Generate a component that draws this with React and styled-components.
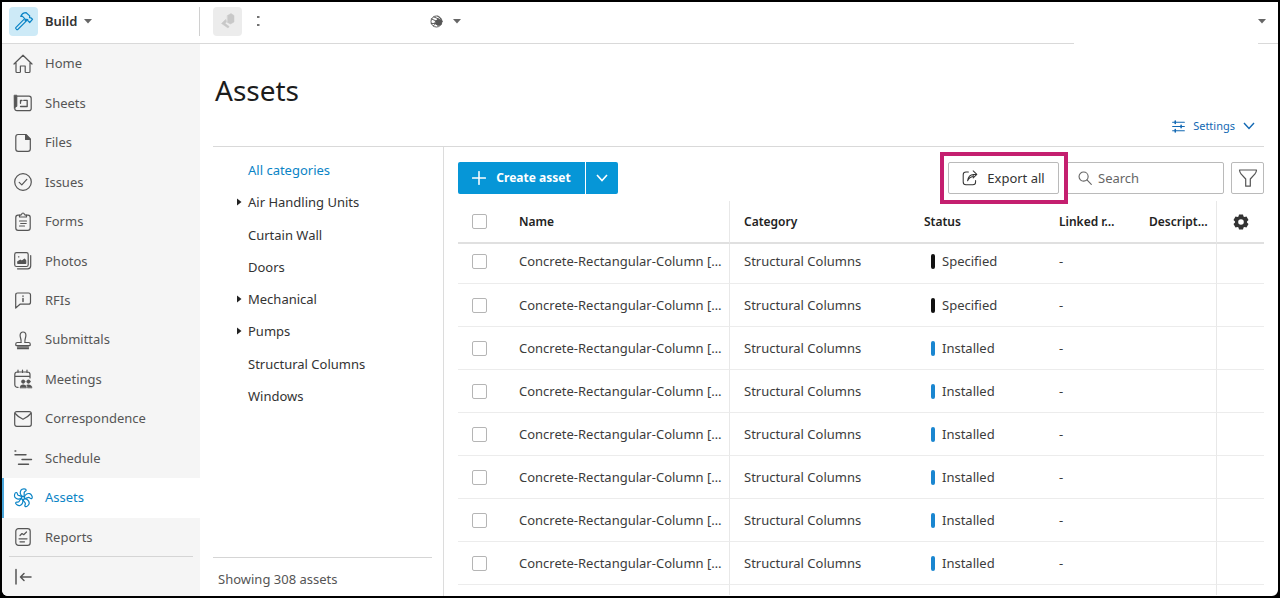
import React from "react";
import styled, { createGlobalStyle, css } from "styled-components";

const GlobalStyle = createGlobalStyle`
  *, *::before, *::after { box-sizing: border-box; }
  body { margin: 0; background: #000; }
  body, button, input { font-family: "Noto Sans", "Open Sans", sans-serif; font-size: 13px; }
  button { margin: 0; padding: 0; border: 0; background: none; color: inherit; cursor: pointer; }
  ul { list-style: none; margin: 0; padding: 0; }
  a { color: inherit; text-decoration: none; }
  svg { display: block; flex: none; }
`;

const Frame = styled.div`
  display: flex;
  flex-direction: column;
  min-height: 100vh;
  border: 2px solid #000;
  border-radius: 0 0 8px 8px;
  background: #fff;
  color: #333;
  line-height: 20px;
`;

const TopBar = styled.header`
  display: flex;
  align-items: center;
  height: 42px;
  border-bottom: 1px solid #d9d9d9;
`;

const ProductArea = styled.div`
  display: flex;
  align-items: center;
  width: 198px;
  height: 29px;
  margin-bottom: 3px;
  padding-left: 7px;
  border-right: 1px solid #d0d0d0;
`;

const ProductButton = styled.button`
  display: flex;
  align-items: center;
  gap: 7px;
  font-weight: 600;
  color: #333;
`;

const Tile = styled.span`
  display: grid;
  place-items: center;
  width: 29px;
  height: 29px;
  border-radius: 4px;
  background: ${(p) => (p.$muted ? "#ececec" : "#cdeaf7")};
  color: ${(p) => (p.$muted ? "#c8c8c8" : "#0a84c6")};
`;

const ProjectArea = styled.div`
  display: flex;
  flex: 1;
  align-items: center;
  gap: 14px;
  margin-bottom: 3px;
  padding-left: 13px;
`;

const ProjectName = styled.span`
  width: 160px;
`;

const ProjectButton = styled.button`
  display: flex;
  align-items: center;
  gap: 10px;
  color: #555;
`;

const AccountSpace = styled.div`
  align-self: stretch;
  width: 184px;
  margin-bottom: -1px;
  background: #fff;
`;

const AccountButton = styled.button`
  width: 20px;
  height: 20px;
  margin-bottom: 3px;
  color: #666;
`;

const Body = styled.div`
  display: flex;
  flex: 1;
`;

const SideBar = styled.nav`
  display: flex;
  flex-direction: column;
  width: 198px;
  background: #f5f5f5;
  border-bottom-left-radius: 6px;
`;

const NavList = styled.ul`
  display: grid;
  flex: 1;
  grid-auto-rows: 1fr;
`;

const NavLink = styled.a`
  display: flex;
  align-items: center;
  gap: 12px;
  height: 100%;
  padding-left: 11px;
  color: #555;
  ${(p) =>
    p.$active &&
    css`
      padding-left: 9px;
      border-left: 2px solid #4ba7dc;
      background: #fff;
      color: #0a84c6;
    `}
`;

const NavText = styled.span`
  padding-bottom: 1px;
`;

const CollapseBar = styled.div`
  display: flex;
  align-items: center;
  height: 40px;
  margin: -1px 7px 0;
  padding-left: 4px;
  border-top: 1px solid #d5d5d5;
  color: #555;
`;

const Main = styled.main`
  display: flex;
  flex: 1;
  flex-direction: column;
  min-width: 0;
  padding: 0 14px 0 13px;
`;

const PageHead = styled.div`
  display: flex;
  justify-content: space-between;
  height: 103px;
  border-bottom: 1px solid #d9d9d9;
`;

const Title = styled.h1`
  margin: 28px 0 0 2px;
  font-size: 28px;
  font-weight: 400;
  line-height: 36px;
  color: #1c1c1c;
`;

const SettingsButton = styled.button`
  display: flex;
  align-items: center;
  align-self: flex-end;
  gap: 8px;
  margin: 0 9px 10px 0;
  font-size: 11px;
  line-height: 20px;
  color: #1268b3;
`;

const Content = styled.div`
  display: flex;
  flex: 1;
`;

const CategoryPane = styled.section`
  display: flex;
  flex-direction: column;
  width: 231px;
  padding-right: 11px;
  border-right: 1px solid #dcdcdc;
`;

const CategoryList = styled.ul`
  display: grid;
  grid-auto-rows: 1fr;
  height: 258px;
  margin-top: 7px;
`;

const CategoryItem = styled.li`
  display: flex;
  align-items: center;
  color: ${(p) => (p.$active ? "#0a84c6" : "#333")};
`;

const Twisty = styled.span`
  display: flex;
  justify-content: flex-end;
  width: 29px;
  margin-right: 6px;
`;

const PaneFooter = styled.p`
  margin: auto 0 0;
  padding: 11px 5px 7px;
  border-top: 1px solid #d5d5d5;
  color: #555;
`;

const AssetsPane = styled.section`
  flex: 1;
  min-width: 0;
  padding-left: 14px;
`;

const Toolbar = styled.div`
  display: flex;
  gap: 7px;
  padding: 15px 0 7px;
`;

const CreateGroup = styled.div`
  display: flex;
  gap: 1px;
  margin-right: auto;
`;

const PrimaryButton = styled.button`
  display: flex;
  align-items: center;
  justify-content: center;
  gap: 10px;
  width: ${(p) => (p.$narrow ? 32 : 127)}px;
  height: 32px;
  padding-bottom: 1px;
  border-radius: ${(p) => (p.$narrow ? "0 2px 2px 0" : "2px 0 0 2px")};
  background: #0696d7;
  color: #fff;
  font-size: 12px;
  font-weight: 700;
`;

const OutlineButton = styled.button`
  display: flex;
  align-items: center;
  justify-content: center;
  gap: 9px;
  width: ${(p) => (p.$square ? 33 : 111)}px;
  height: 32px;
  padding-bottom: 1px;
  border: 1px solid #bababa;
  border-radius: 2px;
  background: #fff;
  color: ${(p) => (p.$square ? "#555" : "#333")};
`;

const Highlighted = styled.div`
  position: relative;
  &::after {
    content: "";
    position: absolute;
    inset: -10px -9px -10px -8px;
    border: 4px solid #c41f6f;
    pointer-events: none;
  }
`;

const SearchBox = styled.label`
  display: flex;
  align-items: center;
  gap: 6px;
  width: 158px;
  height: 32px;
  padding: 0 0 1px 11px;
  border: 1px solid #bababa;
  border-radius: 2px;
  color: #666;
`;

const SearchInput = styled.input`
  flex: 1;
  min-width: 0;
  padding: 0;
  border: 0;
  outline: 0;
  background: none;
  &::placeholder { color: #666; opacity: 1; }
`;

const Table = styled.table`
  width: 100%;
  table-layout: fixed;
  border-collapse: separate;
  border-spacing: 0;
`;

const Col = styled.col`
  width: ${(p) => p.$w};
`;

const cell = css`
  padding: 0 0 0 ${(p) => (p.$center ? 0 : 14)}px;
  text-align: ${(p) => (p.$center ? "center" : "left")};
  white-space: nowrap;
  overflow: hidden;
  ${(p) => p.$ruled && "border-right: 1px solid #e8e8e8;"}
`;

const HeadCell = styled.th`
  ${cell}
  height: 43px;
  border-bottom: 2px solid #e0e0e0;
  font-size: 12px;
  font-weight: 600;
  color: #222;
`;

const Cell = styled.td`
  ${cell}
  height: 43px;
  border-bottom: 1px solid #ececec;
  color: #3c3c3c;
  tr:first-child > & {
    height: 40px;
    padding-bottom: 5px;
  }
`;

const TailCell = styled.td`
  ${cell}
  height: 10px;
`;

const Check = styled.input`
  appearance: none;
  display: block;
  width: 15px;
  height: 15px;
  margin: 0 0 0 14px;
  border: 1px solid #b5b5b5;
  border-radius: 2px;
  background: #fff;
`;

const Status = styled.span`
  display: flex;
  align-items: center;
  gap: 7px;
  padding-left: 7px;
`;

const StatusBar = styled.span`
  width: 4px;
  height: 15px;
  border-radius: 2px;
  background: ${(p) => (p.$kind === "Specified" ? "#111" : "#1a86d0")};
`;

const IconButton = styled.button`
  display: block;
  margin: 0 auto;
  color: #333;
`;

const Svg = ({ size = 20, w = 1.2, children, ...rest }) => (
  <svg
    width={size}
    height={size}
    viewBox="0 0 20 20"
    fill="none"
    stroke="currentColor"
    strokeWidth={w}
    strokeLinecap="round"
    strokeLinejoin="round"
    aria-hidden="true"
    {...rest}
  >
    {children}
  </svg>
);

const Caret = () => (
  <svg width="8" height="5" viewBox="0 0 8 5" fill="#666" aria-hidden="true">
    <path d="M0 0h8L4 4.600z" />
  </svg>
);

const Chevron = ({ w = 1.4 }) => (
  <svg width="12" height="8" viewBox="0 0 12 8" fill="none" stroke="currentColor" strokeWidth={w} aria-hidden="true">
    <path d="M1 1l5 5.500L11 1" />
  </svg>
);

const icons = {
  Home: <path d="M1 10L10 1.200 19 10M3 8.700v8.800q0 1 1 1h2.600q.8 0 .8-.8V12h4.800v5.700q0 .8.8.8H16q1 0 1-1V8.700" />,
  Sheets: (
    <>
      <path d="M4.500 3.200H16q2.200 0 2.200 2.200v10q0 2.200-2.200 2.200H4q-2.200 0-2.200-2.200V3" />
      <path d="M1.500 2.200h2.400v11.200q-1.600.2-2.400 1.500z" fill="currentColor" strokeWidth=".8" />
      <path d="M7.500 13.500h6.700V7.300h-3.500M7.500 10.300V7.500h1.500" strokeWidth="1.300" />
    </>
  ),
  Files: (
    <>
      <path d="M5 1.500h8l4.300 4.500v10q0 2.400-2.400 2.400H5.200q-2.400 0-2.400-2.400V4Q2.800 1.500 5 1.500z" />
      <path d="M12.600 1.800v4.600h4.600z" fill="currentColor" />
    </>
  ),
  Issues: (
    <>
      <circle cx="10" cy="10" r="8.300" />
      <path d="M6.200 10.300l2.600 2.600 5-5.500" />
    </>
  ),
  Forms: (
    <>
      <path d="M6.500 3.200H5Q2.800 3.200 2.800 5.400v10.700q0 2.300 2.300 2.300h9.700q2.400 0 2.400-2.300V5.400q0-2.200-2.200-2.200h-1.500" />
      <path d="M6.500 5V3q1.700.2 2.100-.8Q9 1 10 1t1.400 1.200q.4 1 2.100.8v2z" />
      <path d="M6.500 9h7M7.700 11.500h5.500M6.500 14h5" />
    </>
  ),
  Photos: (
    <>
      <rect x="1.700" y="1.700" width="13.500" height="13.800" rx="1.800" />
      <path d="M17.700 4.500v10.300q0 3-3 3H4.500" />
      <path d="M4.800 12.300V10.800l2.500-1.600 1.500 1 2.700-2 1.200 1.500v2.600z" fill="currentColor" />
      <path d="M5.500 5.800h.4" />
    </>
  ),
  RFIs: (
    <>
      <path d="M2.700 18V5q0-2 2-2h10.800q2 0 2 2v7.200q0 2-2 2H7z" />
      <path d="M10 8.500v3M10 6v.2" strokeWidth="1.500" />
    </>
  ),
  Submittals: (
    <>
      <path d="M8 12.500c.7-3-.9-4.500-.9-7.200a2.900 3.300 0 0 1 5.800 0c0 2.700-1.600 4.200-.9 7.200" />
      <path d="M8 12.500H4.300q-1.500 0-1.500 1.600v.9q0 .7.700.7h13q.7 0 .7-.7v-.9q0-1.600-1.500-1.600H12M4.500 17.200h11M4.500 18.700h11" />
    </>
  ),
  Meetings: (
    <>
      <path d="M5 18.400q-3.200 0-3.200-3V5.500q0-2.500 2.500-2.500h10.200q2.500 0 2.500 2.500V9M1.800 7.300H17M5 1.200V3.500M9.500 1.200V3.500M14 1.200V3.500" />
      <g fill="currentColor" strokeWidth=".5">
        <circle cx="10.200" cy="12.600" r="1.800" />
        <circle cx="15.500" cy="12.600" r="1.800" />
        <path d="M7 18.700q0-3 3.200-3t3.200 3zM14.500 18.700q0-2-.8-2.700 5-.8 5.300 2.700z" />
      </g>
    </>
  ),
  Correspondence: (
    <>
      <rect x="1.700" y="2.700" width="16.600" height="14.600" rx="2" />
      <path d="M2.200 4.500q3.300 3.900 7.800 5.800 4.500-1.900 7.800-5.800" />
    </>
  ),
  Schedule: <path d="M2 3h.8M2 6.800h11M9 11.500h9.500M5.500 16.200h10" strokeWidth="1.400" />,
  Assets: (
    <>
      <circle cx="10" cy="10" r="1.500" />
      {[0, 72, 144, 216, 288].map((a) => (
        <path
          key={a}
          transform={`rotate(${a} 10 10)`}
          d="M9.500 8.400C7.200 7.200 6.600 4.300 8 2.200 9 .7 13 .3 13.200 2.100c.1 1.300-1.700 1.100-2 2.400-.3 1.400.6 2.500-.5 4"
        />
      ))}
    </>
  ),
  Reports: (
    <>
      <rect x="2.800" y="1.700" width="14.400" height="16.600" rx="2.600" />
      <path d="M7 8.500l2-2 1.700 1.200L13.500 5M6 11.800h8M7 14.800h4.500" />
    </>
  ),
};

const navItems = Object.keys(icons);

const categories = [
  ["All categories"],
  ["Air Handling Units", true],
  ["Curtain Wall"],
  ["Doors"],
  ["Mechanical", true],
  ["Pumps", true],
  ["Structural Columns"],
  ["Windows"],
];

const assets = ["Specified", "Specified", "Installed", "Installed", "Installed", "Installed", "Installed", "Installed"];

export default function App() {
  return (
    <>
      <GlobalStyle />
      <Frame>
        <TopBar>
          <ProductArea>
            <ProductButton>
              <Tile>
                <Svg>
                  <path d="M2 16.300L10.700 7.600 12.700 9.600 4 18.200q-.8.700-1.600 0l-.5-.5q-.6-.7.100-1.400zM10.700 7.600L8.300 5.200 6.700 5.500Q8 1.800 12.200 1.700l3.500 3.200-.2 1.700 1.300.2 1.700 1.500-2.800 3.200-1.700-1.600-.2-1.300-1.600-.3-1.100 1.200" />
                </Svg>
              </Tile>
              <span>Build</span>
              <Caret />
            </ProductButton>
          </ProductArea>
          <ProjectArea>
            <Tile $muted>
              <Svg fill="currentColor" w="0.500">
                <path d="M9.500 4.500l3.500-2 3 2v6.500l-3.500 2-3-1.500z" />
                <path d="M7.500 8.500L3.500 12.500 10 17l1.200-1.400-4-3.100 1.300-1.800z" />
              </Svg>
            </Tile>
            <ProjectName>
              <svg width="5" height="12" viewBox="0 0 5 12" stroke="#444" strokeWidth="1.400" aria-hidden="true">
                <path d="M1 2h2.500M1 10h2.500" />
              </svg>
            </ProjectName>
            <ProjectButton aria-label="Project location">
              <Svg size={13} w="1.500">
                <circle cx="10" cy="10" r="8.500" />
                <path d="M9 9l4-3 5 2-1 7-5 1-4-3z" fill="currentColor" />
                <path d="M2 6l7 3M6 3l7 3M2 13l6 0M5 17l4-4M12 2l5 4" />
              </Svg>
              <Caret />
            </ProjectButton>
          </ProjectArea>
          <AccountSpace />
          <AccountButton aria-label="Account">
            <Caret />
          </AccountButton>
        </TopBar>
        <Body>
          <SideBar aria-label="Product tools">
            <NavList>
              {navItems.map((name) => (
                <li key={name}>
                  <NavLink href={`#${name.toLowerCase()}`} $active={name === "Assets"}>
                    <Svg>{icons[name]}</Svg>
                    <NavText>{name}</NavText>
                  </NavLink>
                </li>
              ))}
            </NavList>
            <CollapseBar>
              <button aria-label="Collapse menu">
                <Svg w="1.500">
                  <path d="M3 2.500v14.500M18 10H7.500M11 6.500L7.500 10l3.500 3.500" />
                </Svg>
              </button>
            </CollapseBar>
          </SideBar>
          <Main>
            <PageHead>
              <Title>Assets</Title>
              <SettingsButton>
                <Svg size={13} w="1.700">
                  <path d="M1 3.500h18M1 10h18M1 16.500h18" />
                  <path d="M5 1.500v4M14 8v4M5 14.500v4" strokeWidth="2.400" />
                </Svg>
                Settings
                <Chevron />
              </SettingsButton>
            </PageHead>
            <Content>
              <CategoryPane>
                <CategoryList>
                  {categories.map(([name, nested], i) => (
                    <CategoryItem key={name} $active={i === 0}>
                      <Twisty>
                        {nested && (
                          <svg width="5" height="8" viewBox="0 0 5 8" fill="#222" aria-hidden="true">
                            <path d="M0 .5L4.500 4 0 7.500z" />
                          </svg>
                        )}
                      </Twisty>
                      {name}
                    </CategoryItem>
                  ))}
                </CategoryList>
                <PaneFooter>Showing 308 assets</PaneFooter>
              </CategoryPane>
              <AssetsPane>
                <Toolbar>
                  <CreateGroup>
                    <PrimaryButton>
                      <Svg size={14} w="2.200">
                        <path d="M10 1v18M1 10h18" />
                      </Svg>
                      Create asset
                    </PrimaryButton>
                    <PrimaryButton $narrow aria-label="More create options">
                      <Chevron w={1.6} />
                    </PrimaryButton>
                  </CreateGroup>
                  <Highlighted>
                    <OutlineButton>
                      <Svg size={16} w="1.300">
                        <path d="M8 2.500H5Q1.500 2.500 1.500 6v9q0 3.500 3.500 3.500h8.500Q17 18.500 17 15v-2" />
                        <path d="M14 1.200L18.500 5.500 14 9.800M18 5.500h-3.500Q8 5.800 7 13.500M14 5.500v2.500Q9 8.500 7 13.500" />
                      </Svg>
                      Export all
                    </OutlineButton>
                  </Highlighted>
                  <SearchBox>
                    <Svg size={14} w="1.600">
                      <circle cx="8" cy="8" r="6.500" />
                      <path d="M12.800 12.800L19 19" />
                    </Svg>
                    <SearchInput type="search" placeholder="Search" aria-label="Search assets" />
                  </SearchBox>
                  <OutlineButton $square aria-label="Filter">
                    <Svg>
                      <path d="M1.500 2h17q-.2 2.500-1.500 3.800L12.300 11v7.200H7.700V11L3 5.800Q1.700 4.500 1.500 2z" />
                    </Svg>
                  </OutlineButton>
                </Toolbar>
                <Table>
                  <colgroup>
                    <Col $w="47px" />
                    <Col $w="auto" />
                    <Col $w="180px" />
                    <Col $w="135px" />
                    <Col $w="90px" />
                    <Col $w="82px" />
                    <Col $w="47px" />
                  </colgroup>
                  <thead>
                    <tr>
                      <HeadCell $center>
                        <Check type="checkbox" aria-label="Select all assets" />
                      </HeadCell>
                      <HeadCell $ruled>Name</HeadCell>
                      <HeadCell>Category</HeadCell>
                      <HeadCell>Status</HeadCell>
                      <HeadCell>Linked r…</HeadCell>
                      <HeadCell $ruled>Descript…</HeadCell>
                      <HeadCell $center>
                        <IconButton aria-label="Column settings">
                          <svg width="16" height="16" viewBox="0 0 16 16" fill="currentColor" aria-hidden="true">
                            <path fillRule="evenodd" d="M6 .5h4l.5 2 1 .6 2-.6 2 3.400-1.500 1.500v1.200l1.500 1.500-2 3.400-2-.6-1 .6-.5 2H6l-.5-2-1-.6-2 .6-2-3.400L2 8.600V7.400L.5 5.900l2-3.400 2 .6 1-.6zM8 5.200a2.800 2.800 0 1 0 0 5.600 2.800 2.800 0 0 0 0-5.600z" />
                          </svg>
                        </IconButton>
                      </HeadCell>
                    </tr>
                  </thead>
                  <tbody>
                    {assets.map((status, i) => (
                      <tr key={i}>
                        <Cell $center>
                          <Check type="checkbox" aria-label={`Select asset ${i + 1}`} />
                        </Cell>
                        <Cell $ruled>Concrete-Rectangular-Column […</Cell>
                        <Cell>Structural Columns</Cell>
                        <Cell>
                          <Status>
                            <StatusBar $kind={status} />
                            {status}
                          </Status>
                        </Cell>
                        <Cell>-</Cell>
                        <Cell $ruled />
                        <Cell />
                      </tr>
                    ))}
                  </tbody>
                  <tfoot>
                    <tr>
                      <TailCell />
                      <TailCell $ruled />
                      <TailCell colSpan={4} $ruled />
                      <TailCell />
                    </tr>
                  </tfoot>
                </Table>
              </AssetsPane>
            </Content>
          </Main>
        </Body>
      </Frame>
    </>
  );
}
